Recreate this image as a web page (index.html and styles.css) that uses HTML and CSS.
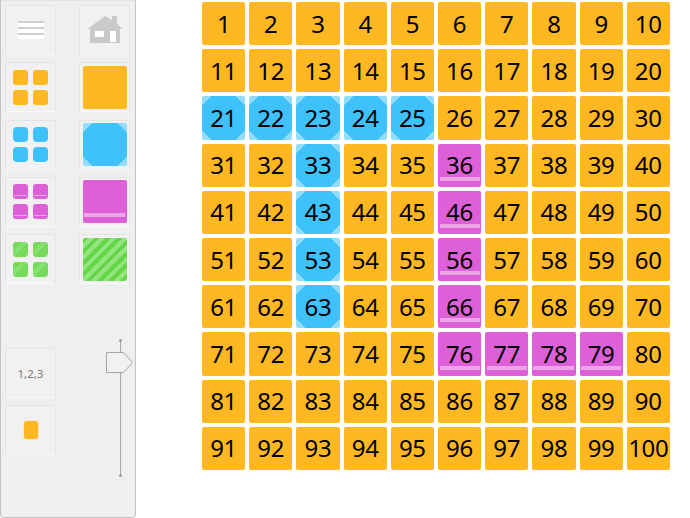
FILE: index.html
```html
<!doctype html>
<html lang="en">
<head>
    <meta charset="UTF-8">
    <title>Hundred Square</title>
    <link rel="stylesheet" href="styles.css">
</head>
<body>
    <aside class="sidebar">
        <div class="tools">
            <div class="tool">
                <div class="menu-icon"><span></span><span></span><span></span></div>
            </div>
            <div class="tool">
                <svg class="home-icon" width="36" height="29" viewBox="0 0 36 29">
                    <path fill="#c9c9c9" d="M18 0 25 4V0H30V8L35.500 13H33V27H3V13H0.500Z"/>
                    <path fill="#fff" d="M8 15H17V21H8ZM23 15H29V26H23Z"/>
                </svg>
            </div>
            <div class="tool">
                <div class="minis"><i class="mini orange"></i><i class="mini orange"></i><i class="mini orange"></i><i class="mini orange"></i></div>
            </div>
            <div class="tool"><div class="swatch orange"></div></div>
            <div class="tool">
                <div class="minis"><i class="mini sky-mini"></i><i class="mini sky-mini"></i><i class="mini sky-mini"></i><i class="mini sky-mini"></i></div>
            </div>
            <div class="tool"><div class="swatch sky"></div></div>
            <div class="tool">
                <div class="minis"><i class="mini pink"></i><i class="mini pink"></i><i class="mini pink"></i><i class="mini pink"></i></div>
            </div>
            <div class="tool"><div class="swatch pink"></div></div>
            <div class="tool">
                <div class="minis"><i class="mini stripes"></i><i class="mini stripes"></i><i class="mini stripes"></i><i class="mini stripes"></i></div>
            </div>
            <div class="tool"><div class="swatch stripes"></div></div>
        </div>
        <div class="lower">
            <div class="lower-tools">
                <div class="tool tool-label">1,2,3</div>
                <div class="tool"><div class="chip"></div></div>
            </div>
            <div class="slider">
                <svg width="30" height="140" viewBox="0 0 30 140">
                    <path stroke="#a8a8a8" d="M16.500 2V137"/>
                    <circle cx="16.500" cy="2.500" r="1.500" fill="#999"/>
                    <circle cx="16.500" cy="137.500" r="1.500" fill="#999"/>
                    <path fill="#f1f1f1" stroke="#a5a5a5" d="M2.500 14.500H19.500L28.500 24.500 19.500 34.500H2.500Z"/>
                </svg>
            </div>
        </div>
    </aside>

    <main class="board">
        <div class="cell">1</div><div class="cell">2</div><div class="cell">3</div><div class="cell">4</div><div class="cell">5</div><div class="cell">6</div><div class="cell">7</div><div class="cell">8</div><div class="cell">9</div><div class="cell">10</div>
        <div class="cell">11</div><div class="cell">12</div><div class="cell">13</div><div class="cell">14</div><div class="cell">15</div><div class="cell">16</div><div class="cell">17</div><div class="cell">18</div><div class="cell">19</div><div class="cell">20</div>
        <div class="cell sky">21</div><div class="cell sky">22</div><div class="cell sky">23</div><div class="cell sky">24</div><div class="cell sky">25</div><div class="cell">26</div><div class="cell">27</div><div class="cell">28</div><div class="cell">29</div><div class="cell">30</div>
        <div class="cell">31</div><div class="cell">32</div><div class="cell sky">33</div><div class="cell">34</div><div class="cell">35</div><div class="cell pink">36</div><div class="cell">37</div><div class="cell">38</div><div class="cell">39</div><div class="cell">40</div>
        <div class="cell">41</div><div class="cell">42</div><div class="cell sky">43</div><div class="cell">44</div><div class="cell">45</div><div class="cell pink">46</div><div class="cell">47</div><div class="cell">48</div><div class="cell">49</div><div class="cell">50</div>
        <div class="cell">51</div><div class="cell">52</div><div class="cell sky">53</div><div class="cell">54</div><div class="cell">55</div><div class="cell pink">56</div><div class="cell">57</div><div class="cell">58</div><div class="cell">59</div><div class="cell">60</div>
        <div class="cell">61</div><div class="cell">62</div><div class="cell sky">63</div><div class="cell">64</div><div class="cell">65</div><div class="cell pink">66</div><div class="cell">67</div><div class="cell">68</div><div class="cell">69</div><div class="cell">70</div>
        <div class="cell">71</div><div class="cell">72</div><div class="cell">73</div><div class="cell">74</div><div class="cell">75</div><div class="cell pink">76</div><div class="cell pink">77</div><div class="cell pink">78</div><div class="cell pink">79</div><div class="cell">80</div>
        <div class="cell">81</div><div class="cell">82</div><div class="cell">83</div><div class="cell">84</div><div class="cell">85</div><div class="cell">86</div><div class="cell">87</div><div class="cell">88</div><div class="cell">89</div><div class="cell">90</div>
        <div class="cell">91</div><div class="cell">92</div><div class="cell">93</div><div class="cell">94</div><div class="cell">95</div><div class="cell">96</div><div class="cell">97</div><div class="cell">98</div><div class="cell">99</div><div class="cell">100</div>
    </main>
</body>
</html>
```

FILE: styles.css
```css
* {
    margin: 0;
    padding: 0;
    box-sizing: border-box;
}

html, body {
    width: 100%;
    height: 100%;
    overflow: hidden;
    background: #fff;
}

body {
    display: flex;
    align-items: flex-start;
    font-family: "DejaVu Sans", sans-serif;
}

/* shared tile colours */
.orange {
    background-color: #ffb822;
}

.sky {
    background-color: #3fc1fb;
    background-image:
        linear-gradient(135deg, #93dcfc 7px, transparent 7px),
        linear-gradient(225deg, #93dcfc 7px, transparent 7px),
        linear-gradient(45deg, #93dcfc 7px, transparent 7px),
        linear-gradient(315deg, #93dcfc 7px, transparent 7px);
}

.pink {
    background-color: #de60d8;
    background-image: linear-gradient(#eca6e8, #eca6e8);
    background-repeat: no-repeat;
    background-size: calc(100% - 3px) 4px;
    background-position: center bottom 6px;
}

.stripes {
    background-color: #66d548;
    background-image: repeating-linear-gradient(135deg, #66d548 0 4px, #93e67d 4px 8px);
}

/* sidebar */
.sidebar {
    flex: none;
    width: 136px;
    height: 518px;
    padding: 4px 0 0 4px;
    background: #efefef;
    border: 1px solid #c4c4c4;
    border-top-color: #e2e2e2;
    border-radius: 0 0 4px 4px;
}

.tools {
    display: grid;
    grid-template-columns: 51px 51px;
    grid-auto-rows: 50px;
    column-gap: 23px;
    row-gap: 7.300px;
}

.tool {
    display: flex;
    align-items: center;
    justify-content: center;
    width: 51px;
    height: 50px;
    background: #f1f1f1;
    border: 1px solid #e4e4e4;
    border-bottom-color: #f9f9f9;
    border-radius: 2px;
}

.menu-icon {
    width: 26px;
}

.menu-icon span {
    display: block;
    height: 6px;
    border-top: 2px solid #cfcfcf;
    background: #fff;
}

.home-icon {
    display: block;
    margin-top: 1px;
}

.minis {
    display: grid;
    grid-template-columns: 15px 15px;
    grid-auto-rows: 15px;
    gap: 5px;
}

.mini {
    display: block;
    border-radius: 3px;
}

.sky-mini {
    background-color: #3fc1fb;
    border-radius: 4px;
}

.mini.pink {
    background-size: calc(100% - 2px) 1px;
    background-position: center bottom 3px;
}

.mini.stripes {
    background-image: repeating-linear-gradient(135deg, #66d548 0 1px, #93e67d 1px 2px);
}

.swatch {
    width: 44px;
    height: 43px;
    border-radius: 2px;
}

.lower {
    display: flex;
    margin-top: 54px;
}

.lower-tools {
    flex: none;
    display: flex;
    flex-direction: column;
    gap: 7px;
    margin-top: 10px;
}

.tool-label {
    color: #777;
    font-family: "Noto Sans", sans-serif;
    font-size: 11.500px;
}

.chip {
    width: 14px;
    height: 18px;
    background: #ffb822;
    border-radius: 3px;
    box-shadow: 0 0 2px #ffcf70;
}

.slider {
    flex: none;
    margin-left: 48px;
}

.slider svg {
    display: block;
}

/* hundred square */
.board {
    display: grid;
    grid-template-columns: repeat(10, 43.200px);
    grid-auto-rows: 43.200px;
    gap: 4px;
    margin: 2px 0 0 66px;
}

.cell {
    display: flex;
    align-items: center;
    justify-content: center;
    background-color: #ffb822;
    border-radius: 2px;
    color: #000;
    font-family: "Noto Sans", sans-serif;
    font-size: 24px;
    letter-spacing: -0.300px;
    line-height: 1;
}

.cell.sky {
    background-color: #3fc1fb;
}

.cell.pink {
    background-color: #de60d8;
}
```
